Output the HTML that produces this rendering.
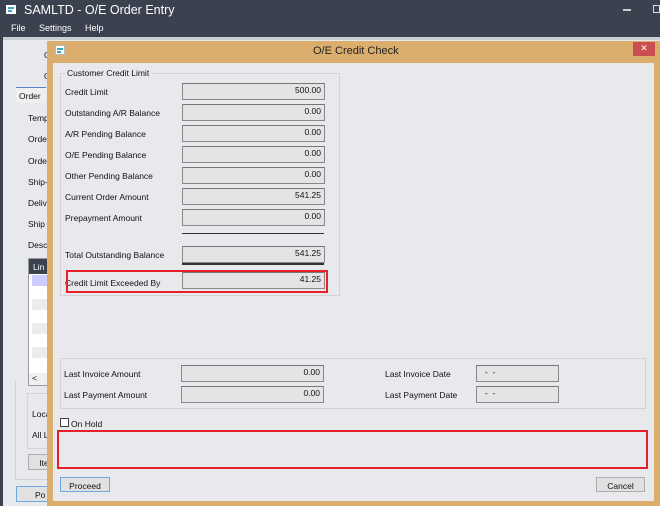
<!DOCTYPE html>
<html><head><meta charset="utf-8"><style>
*{margin:0;padding:0;box-sizing:border-box}
body{width:660px;height:506px;overflow:hidden;background:#e8e9ec;font-family:"Liberation Sans",sans-serif;font-size:8.5px;color:#111;position:relative}
.a{position:absolute}
.tb{position:absolute;background:#e4e4e4;border:1px solid #888;border-top-color:#777;height:17px;text-align:right;padding:1px 3px 0 0;font-size:8.5px}
.lb{position:absolute;font-size:8.5px}
.btn{position:absolute;background:#e1e1e1;border:1px solid #adadad;text-align:center;font-size:8.5px;padding-top:3px}
.grp{position:absolute;border:1px solid #d3d3d3}
</style></head><body>
<!-- main window -->
<div class="a" style="left:0;top:0;width:660px;height:37px;background:#3c4150"></div>
<div class="a" style="left:0;top:0;width:3px;height:506px;background:#3c4150"></div>
<div class="a" style="left:6px;top:5px;width:10px;height:9px;background:#fff"></div>
<div class="a" style="left:8px;top:7px;width:6px;height:2px;background:#3ea7c4"></div>
<div class="a" style="left:8px;top:10px;width:4px;height:2px;background:#3ea7c4"></div>
<div class="a" style="left:24px;top:3px;color:#fff;font-size:12.5px">SAMLTD - O/E Order Entry</div>
<div class="a" style="left:11px;top:23px;color:#fff;font-size:9px">File</div>
<div class="a" style="left:39px;top:23px;color:#fff;font-size:9px">Settings</div>
<div class="a" style="left:85px;top:23px;color:#fff;font-size:9px">Help</div>
<div class="a" style="left:623px;top:9px;width:8px;height:2px;background:#ccc"></div>
<div class="a" style="left:653px;top:5px;width:7px;height:8px;border:1px solid #ddd"></div>
<div class="a" style="left:3px;top:37px;width:657px;height:3px;background:#c9cdd4"></div>
<div class="a" style="left:44px;top:50px">O</div>
<div class="a" style="left:44px;top:71px">O</div>
<div class="a" style="left:16px;top:87px;width:30px;height:16px;background:#f0f0f0;border-top:1px solid #5a7fd0;padding:3px 0 0 3px">Order</div>
<div class="a" style="left:28px;top:113px">Temp</div>
<div class="a" style="left:28px;top:134px">Order</div>
<div class="a" style="left:28px;top:156px">Order</div>
<div class="a" style="left:28px;top:177px">Ship-T</div>
<div class="a" style="left:28px;top:198px">Delive</div>
<div class="a" style="left:28px;top:219px">Ship V</div>
<div class="a" style="left:28px;top:240px">Descr</div>
<div class="a" style="left:28px;top:258px;width:20px;height:128px;background:#fff;border:1px solid #999"></div>
<div class="a" style="left:29px;top:259px;width:19px;height:15px;background:#3c4150;color:#fff;padding:3px 0 0 4px">Lin</div>
<div class="a" style="left:32px;top:275px;width:16px;height:11px;background:#ccccff"></div>
<div class="a" style="left:32px;top:299px;width:16px;height:11px;background:#ececec"></div>
<div class="a" style="left:32px;top:323px;width:16px;height:11px;background:#ececec"></div>
<div class="a" style="left:32px;top:347px;width:16px;height:11px;background:#ececec"></div>
<div class="a" style="left:29px;top:373px;width:19px;height:12px;background:#f0f0f0;padding-left:3px">&lt;</div>
<div class="grp" style="left:27px;top:393px;width:22px;height:56px"></div>
<div class="a" style="left:32px;top:409px">Loca</div>
<div class="a" style="left:32px;top:430px">All L</div>
<div class="btn" style="left:28px;top:454px;width:22px;height:16px;padding-left:10px">Ite</div>
<div class="grp" style="left:15px;top:380px;width:34px;height:100px;border-top:none;border-right:none"></div>
<div class="btn" style="left:16px;top:486px;width:34px;height:16px;border-color:#6fa7e0;padding-left:18px;text-align:left">Po</div>
<!-- dialog -->
<div class="a" style="left:47px;top:41px;width:613px;height:465px;background:#dcae6e"></div>
<div class="a" style="left:53px;top:63px;width:601px;height:438px;background:#e8e9ec"></div>
<div class="a" style="left:55px;top:45px;width:10px;height:10px;background:#fff;border:1px solid #bbb"></div>
<div class="a" style="left:57px;top:48px;width:6px;height:2px;background:#3ea7c4"></div>
<div class="a" style="left:57px;top:51px;width:4px;height:2px;background:#3ea7c4"></div>
<div class="a" style="left:313px;top:45px;font-size:11px;color:#222">O/E Credit Check</div>
<div class="a" style="left:633px;top:42px;width:22px;height:14px;background:#c94f4f;color:#fff;text-align:center;font-size:9px;line-height:13px">✕</div>
<div class="grp" style="left:60px;top:73px;width:280px;height:223px"></div>
<div class="a" style="left:65px;top:68px;background:#e8e9ec;padding:0 2px">Customer Credit Limit</div>
<div class="lb" style="left:65px;top:87px">Credit Limit</div><div class="tb" style="left:182px;top:83px;width:143px">500.00</div>
<div class="lb" style="left:65px;top:108px">Outstanding A/R Balance</div><div class="tb" style="left:182px;top:104px;width:143px">0.00</div>
<div class="lb" style="left:65px;top:129px">A/R Pending Balance</div><div class="tb" style="left:182px;top:125px;width:143px">0.00</div>
<div class="lb" style="left:65px;top:150px">O/E Pending Balance</div><div class="tb" style="left:182px;top:146px;width:143px">0.00</div>
<div class="lb" style="left:65px;top:171px">Other Pending Balance</div><div class="tb" style="left:182px;top:167px;width:143px">0.00</div>
<div class="lb" style="left:65px;top:192px">Current Order Amount</div><div class="tb" style="left:182px;top:188px;width:143px">541.25</div>
<div class="lb" style="left:65px;top:213px">Prepayment Amount</div><div class="tb" style="left:182px;top:209px;width:143px">0.00</div>
<div class="a" style="left:182px;top:233px;width:142px;height:1px;background:#333"></div>
<div class="lb" style="left:65px;top:250px">Total Outstanding Balance</div><div class="tb" style="left:182px;top:246px;width:143px">541.25</div>
<div class="a" style="left:182px;top:263px;width:142px;height:2px;background:#333"></div>
<div class="lb" style="left:65px;top:278px">Credit Limit Exceeded By</div><div class="tb" style="left:182px;top:272px;width:143px">41.25</div>
<div class="a" style="left:66px;top:270px;width:262px;height:23px;border:2px solid #e8202a"></div>
<div class="grp" style="left:60px;top:358px;width:586px;height:51px"></div>
<div class="lb" style="left:64px;top:369px">Last Invoice Amount</div><div class="tb" style="left:181px;top:365px;width:143px">0.00</div>
<div class="lb" style="left:64px;top:390px">Last Payment Amount</div><div class="tb" style="left:181px;top:386px;width:143px">0.00</div>
<div class="lb" style="left:385px;top:369px">Last Invoice Date</div><div class="tb" style="left:476px;top:365px;width:83px;text-align:left;padding-left:8px">-&nbsp; -</div>
<div class="lb" style="left:385px;top:390px">Last Payment Date</div><div class="tb" style="left:476px;top:386px;width:83px;text-align:left;padding-left:8px">-&nbsp; -</div>
<div class="a" style="left:60px;top:418px;width:9px;height:9px;background:#fff;border:1px solid #444"></div>
<div class="lb" style="left:71px;top:419px">On Hold</div>
<div class="a" style="left:57px;top:430px;width:591px;height:39px;border:2px solid #e8202a"></div>
<div class="btn" style="left:60px;top:477px;width:50px;height:15px;border-color:#6fa7e0">Proceed</div>
<div class="btn" style="left:596px;top:477px;width:49px;height:15px">Cancel</div>
</body></html>
